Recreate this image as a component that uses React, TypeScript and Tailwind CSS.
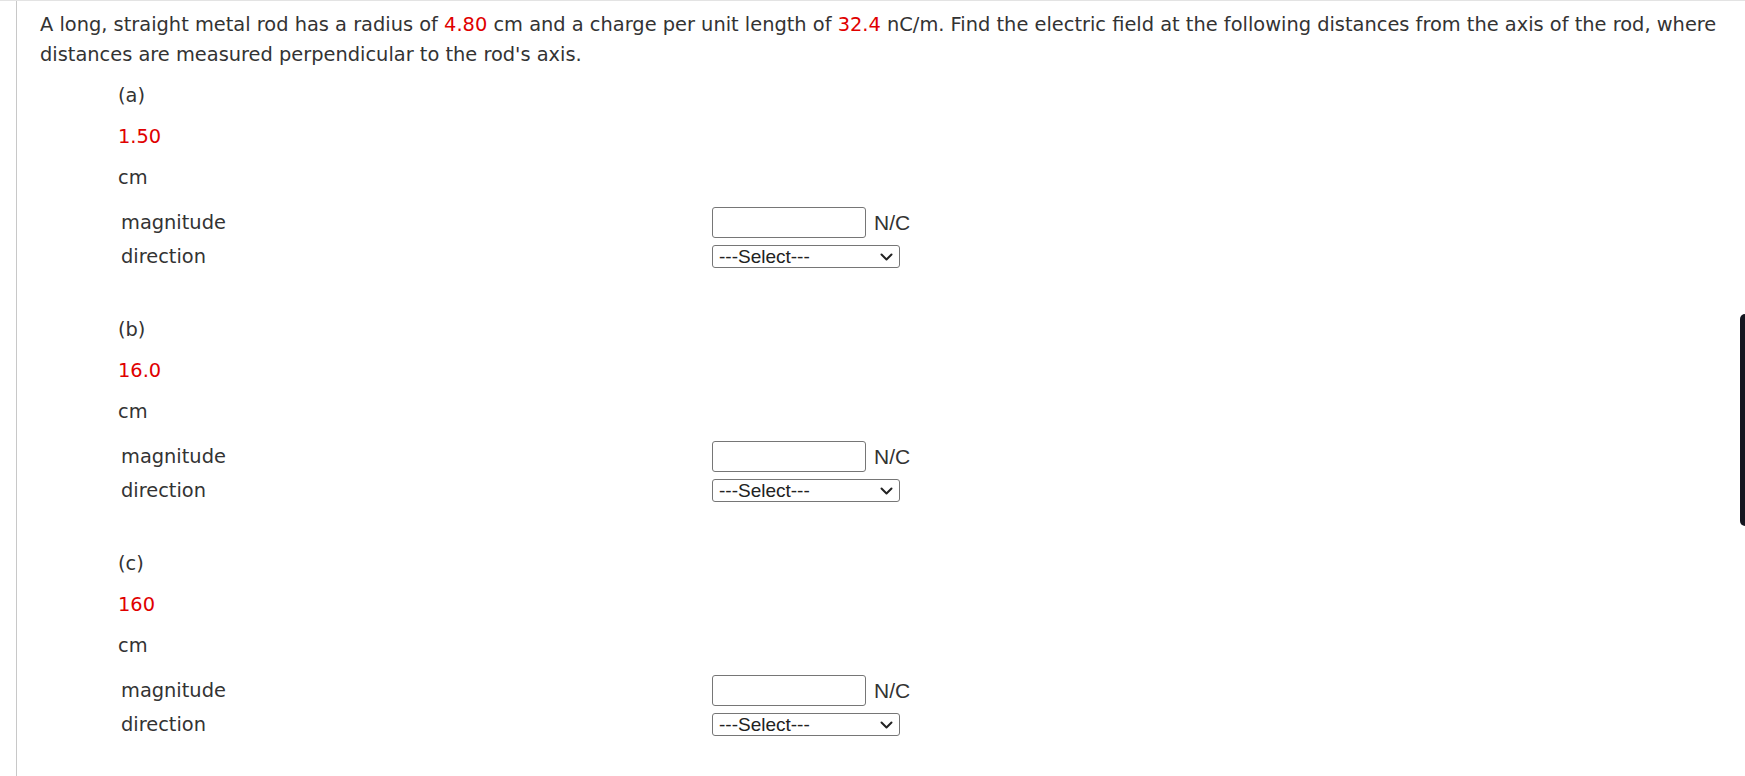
import React from "react";

const sections = [
  { label: "(a)", value: "1.50" },
  { label: "(b)", value: "16.0" },
  { label: "(c)", value: "160" },
];

function Chevron() {
  return (
    <svg
      className="pointer-events-none absolute right-[7px] top-1/2 -translate-y-1/2"
      width="13"
      height="8"
      viewBox="0 0 13 8"
      fill="none"
    >
      <path d="M1.5 1.5 L6.5 6.5 L11.5 1.5" stroke="#222" strokeWidth="2" strokeLinecap="round" strokeLinejoin="round" />
    </svg>
  );
}

function Section({ label, value, first }: { label: string; value: string; first: boolean }) {
  return (
    <div className={first ? "mt-[5px]" : "mt-[41px]"}>
      <div className="flex h-[41px] items-center">{label}</div>
      <div className="flex h-[41px] items-center text-[#e00000]">{value}</div>
      <div className="flex h-[41px] items-center">cm</div>
      <div className="mt-[9px] flex h-[31px] items-center pl-[3px]">
        <div className="w-[591px]">magnitude</div>
        <input
          type="text"
          className="block h-[31px] w-[154px] rounded-[3px] border border-[#767676] bg-white outline-none"
        />
        <span className="ml-[8px] font-['Liberation_Sans',Arial,sans-serif] text-[21px] text-[#333]">N/C</span>
      </div>
      <div className="mt-[7px] flex h-[23px] items-center pl-[3px]">
        <div className="w-[591px]">direction</div>
        <div className="relative h-[23px] w-[188px]">
          <select
            defaultValue=""
            className="block h-[23px] w-[188px] appearance-none rounded-[3px] border border-[#767676] bg-white py-0 pl-[6px] font-['Liberation_Sans',Arial,sans-serif] text-[19px] leading-[21px] text-[#222] outline-none"
          >
            <option value="">---Select---</option>
          </select>
          <Chevron />
        </div>
      </div>
    </div>
  );
}

export default function App() {
  return (
    <div className="relative h-[776px] w-full overflow-hidden border-t border-[#e3e3e3] bg-white font-['DejaVu_Sans',Verdana,sans-serif] text-[19.4px] text-[#333]">
      <div className="ml-[16px] h-full border-l border-[#c8c8c8] pl-[23px] pt-[9px]">
        <p className="w-[1740px] leading-[30px]">
          A long, straight metal rod has a radius of <span className="text-[#e00000]">4.80</span> cm and a charge per unit
          length of <span className="text-[#e00000]">32.4</span> nC/m. Find the electric field at the following distances
          from the axis of the rod, where distances are measured perpendicular to the rod's axis.
        </p>
        <div className="pl-[78px]">
          {sections.map((s, i) => (
            <Section key={s.label} label={s.label} value={s.value} first={i === 0} />
          ))}
        </div>
      </div>
      <div className="absolute right-0 top-[313px] h-[212px] w-[5px] rounded-l-[6px] bg-[#14161f]" />
    </div>
  );
}
